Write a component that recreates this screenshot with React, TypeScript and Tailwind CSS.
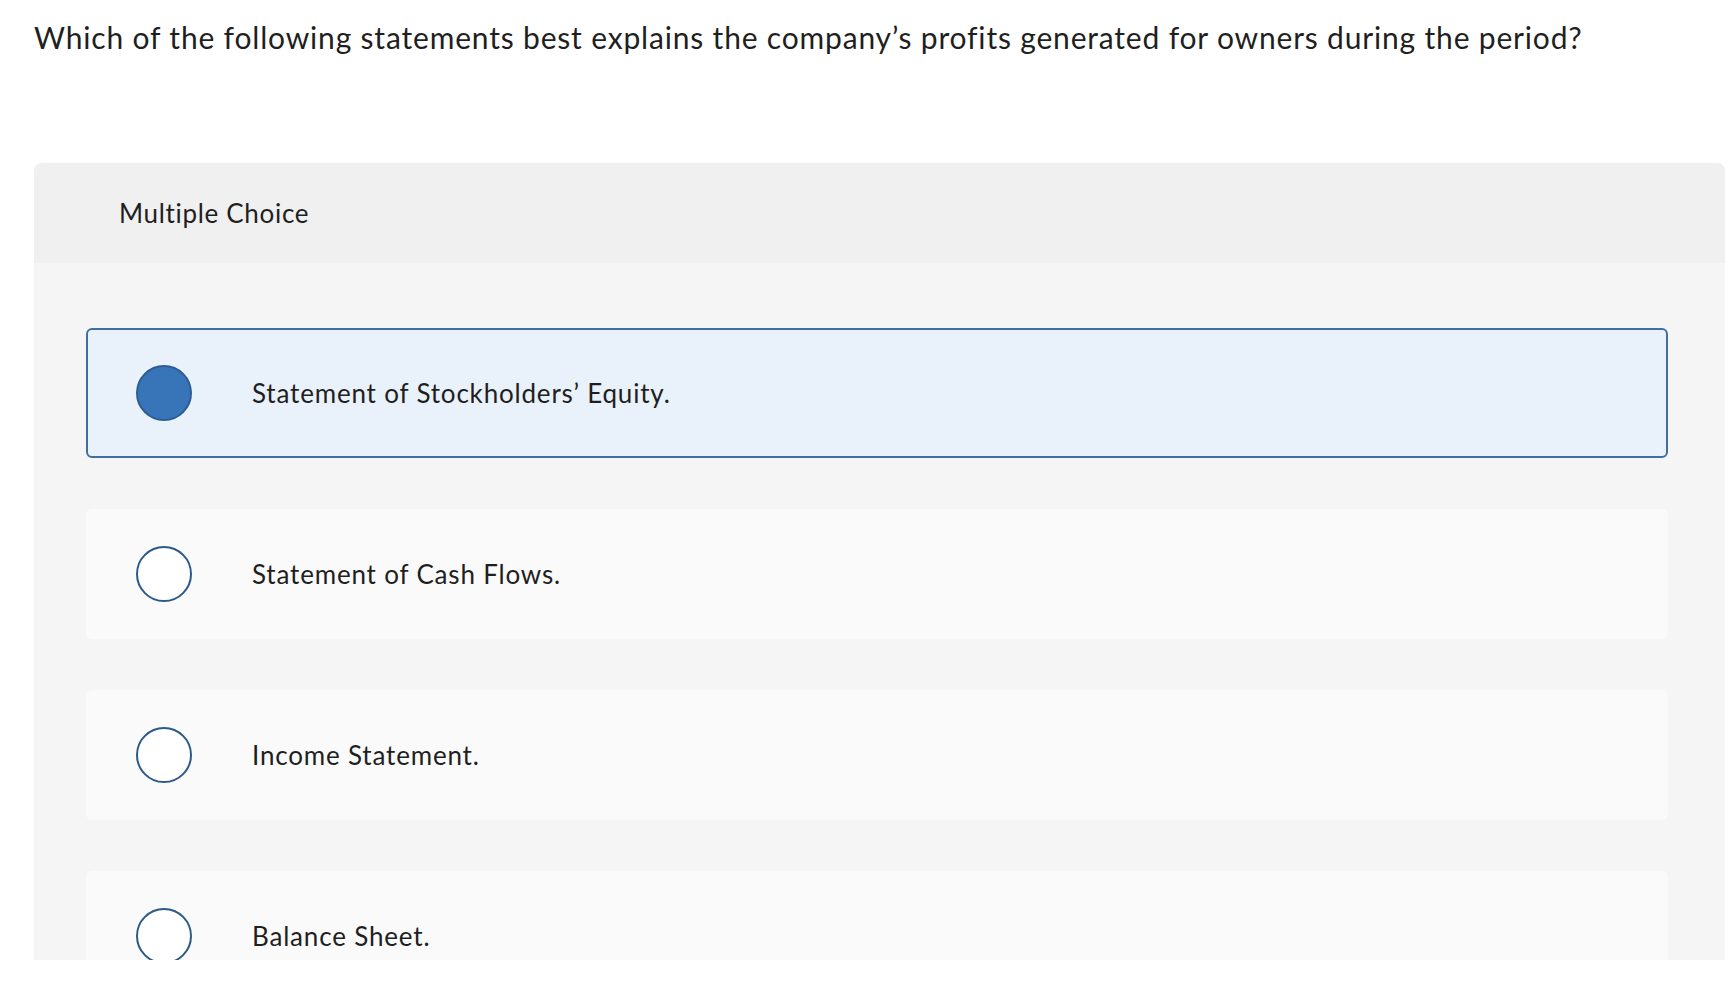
import React from "react";

const options = [
  { label: "Statement of Stockholders’ Equity.", selected: true },
  { label: "Statement of Cash Flows.", selected: false },
  { label: "Income Statement.", selected: false },
  { label: "Balance Sheet.", selected: false },
];

export default function App() {
  return (
    <div className="w-[1733px] h-[999px] bg-white overflow-hidden font-['Lato','Open_Sans',sans-serif] text-[#1f1f1f]">
      <div className="pt-[19px] pl-[34px] text-[30px] leading-[36px] tracking-[0.82px]">
        Which of the following statements best explains the company’s profits generated for owners during the period?
      </div>
      <div className="mt-[108px] ml-[34px] w-[1691px] h-[797px] rounded-t-[8px] overflow-hidden bg-[#f5f5f5]">
        <div className="h-[100px] bg-[#f0f0f0] flex items-center pl-[85px] text-[26px] tracking-[0.68px]">
          Multiple Choice
        </div>
        <div className="pt-[65px] pl-[52px] pr-[57px] flex flex-col gap-[51px]">
          {options.map((o) => (
            <div
              key={o.label}
              className={
                o.selected
                  ? "h-[130px] shrink-0 rounded-[6px] border-2 border-[#3f6fa2] bg-[#e9f1fa] flex items-center pl-[48px]"
                  : "h-[130px] shrink-0 rounded-[6px] bg-[#fafafa] flex items-center pl-[50px]"
              }
            >
              <div
                className={
                  o.selected
                    ? "w-[56px] h-[56px] rounded-full border-2 border-[#2c5d92] bg-[#3874b8] shrink-0"
                    : "w-[56px] h-[56px] rounded-full border-2 border-[#2b5a8a] bg-white shrink-0"
                }
              />
              <div className="ml-[60px] text-[26px] tracking-[0.82px]">{o.label}</div>
            </div>
          ))}
        </div>
      </div>
    </div>
  );
}
